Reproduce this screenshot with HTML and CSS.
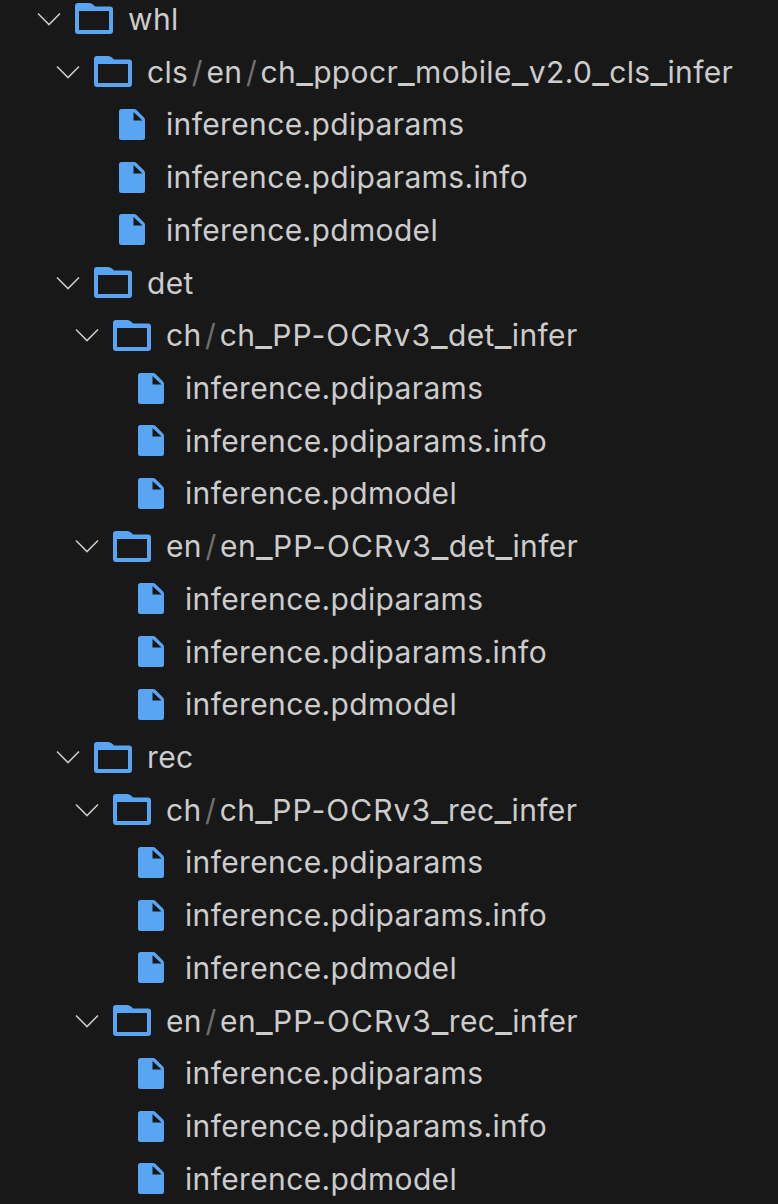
FILE: index.html
```html
<!DOCTYPE html>
<html lang="en">
<head>
    <meta charset="UTF-8">
    <meta name="viewport" content="width=device-width, initial-scale=1.0">
    <title>whl</title>
    <link rel="stylesheet" href="styles.css">
</head>
<body>
    <svg class="defs" width="0" height="0">
        <symbol id="chevron" viewBox="0 0 24 14">
            <path d="M1 1.500 L12 12.500 L23 1.500" fill="none" stroke="#c8c8c8" stroke-width="1.6"/>
        </symbol>
        <symbol id="folder" viewBox="0 0 38 31">
            <path fill="#58a5f4" fill-rule="evenodd" d="M3 0 H14 Q16.500 0 18 1.500 L20 3.500 H35 A3 3 0 0 1 38 6.500 V28 A3 3 0 0 1 35 31 H3 A3 3 0 0 1 0 28 V3 A3 3 0 0 1 3 0 Z M4 8 V27 H34 V8 Z"/>
        </symbol>
        <symbol id="file" viewBox="0 0 26 31">
            <path fill="#58a5f4" d="M2.500 0 H15 Q16.500 0 17.500 1 L25 8.500 Q26 9.500 26 11 V28.500 A2.500 2.500 0 0 1 23.500 31 H2.500 A2.500 2.500 0 0 1 0 28.500 V2.500 A2.500 2.500 0 0 1 2.500 0 Z"/>
            <path fill="#181818" d="M14.500 3 L23.500 11.500 H14.500 Z"/>
        </symbol>
    </svg>

    <div class="tree">
        <div class="row level-0"><span class="twistie"><svg class="chevron"><use href="#chevron"/></svg></span><svg class="folder"><use href="#folder"/></svg><span>whl</span></div>

        <div class="row level-1"><span class="twistie"><svg class="chevron"><use href="#chevron"/></svg></span><svg class="folder"><use href="#folder"/></svg><span>cls<i class="sep">/</i>en<i class="sep">/</i>ch<i class="us">_</i>ppocr<i class="us">_</i>mobile<i class="us">_</i>v2.0<i class="us">_</i>cls<i class="us">_</i>infer</span></div>
        <div class="row level-2"><span class="twistie"></span><svg class="file"><use href="#file"/></svg><span>inference.pdiparams</span></div>
        <div class="row level-2"><span class="twistie"></span><svg class="file"><use href="#file"/></svg><span>inference.pdiparams.info</span></div>
        <div class="row level-2"><span class="twistie"></span><svg class="file"><use href="#file"/></svg><span>inference.pdmodel</span></div>

        <div class="row level-1"><span class="twistie"><svg class="chevron"><use href="#chevron"/></svg></span><svg class="folder"><use href="#folder"/></svg><span>det</span></div>
        <div class="row level-2"><span class="twistie"><svg class="chevron"><use href="#chevron"/></svg></span><svg class="folder"><use href="#folder"/></svg><span>ch<i class="sep">/</i>ch<i class="us">_</i><span class="caps">PP-OCRv3</span><i class="us">_</i>det<i class="us">_</i>infer</span></div>
        <div class="row level-3"><span class="twistie"></span><svg class="file"><use href="#file"/></svg><span>inference.pdiparams</span></div>
        <div class="row level-3"><span class="twistie"></span><svg class="file"><use href="#file"/></svg><span>inference.pdiparams.info</span></div>
        <div class="row level-3"><span class="twistie"></span><svg class="file"><use href="#file"/></svg><span>inference.pdmodel</span></div>
        <div class="row level-2"><span class="twistie"><svg class="chevron"><use href="#chevron"/></svg></span><svg class="folder"><use href="#folder"/></svg><span>en<i class="sep">/</i>en<i class="us">_</i><span class="caps">PP-OCRv3</span><i class="us">_</i>det<i class="us">_</i>infer</span></div>
        <div class="row level-3"><span class="twistie"></span><svg class="file"><use href="#file"/></svg><span>inference.pdiparams</span></div>
        <div class="row level-3"><span class="twistie"></span><svg class="file"><use href="#file"/></svg><span>inference.pdiparams.info</span></div>
        <div class="row level-3"><span class="twistie"></span><svg class="file"><use href="#file"/></svg><span>inference.pdmodel</span></div>

        <div class="row level-1"><span class="twistie"><svg class="chevron"><use href="#chevron"/></svg></span><svg class="folder"><use href="#folder"/></svg><span>rec</span></div>
        <div class="row level-2"><span class="twistie"><svg class="chevron"><use href="#chevron"/></svg></span><svg class="folder"><use href="#folder"/></svg><span>ch<i class="sep">/</i>ch<i class="us">_</i><span class="caps">PP-OCRv3</span><i class="us">_</i>rec<i class="us">_</i>infer</span></div>
        <div class="row level-3"><span class="twistie"></span><svg class="file"><use href="#file"/></svg><span>inference.pdiparams</span></div>
        <div class="row level-3"><span class="twistie"></span><svg class="file"><use href="#file"/></svg><span>inference.pdiparams.info</span></div>
        <div class="row level-3"><span class="twistie"></span><svg class="file"><use href="#file"/></svg><span>inference.pdmodel</span></div>
        <div class="row level-2"><span class="twistie"><svg class="chevron"><use href="#chevron"/></svg></span><svg class="folder"><use href="#folder"/></svg><span>en<i class="sep">/</i>en<i class="us">_</i><span class="caps">PP-OCRv3</span><i class="us">_</i>rec<i class="us">_</i>infer</span></div>
        <div class="row level-3"><span class="twistie"></span><svg class="file"><use href="#file"/></svg><span>inference.pdiparams</span></div>
        <div class="row level-3"><span class="twistie"></span><svg class="file"><use href="#file"/></svg><span>inference.pdiparams.info</span></div>
        <div class="row level-3"><span class="twistie"></span><svg class="file"><use href="#file"/></svg><span>inference.pdmodel</span></div>
    </div>
</body>
</html>
```

FILE: styles.css
```css
html, body {
    height: 100%;
}

body {
    margin: 0;
    overflow: hidden;
    background: #181818;
    color: #cccccc;
    font-family: 'Inter', 'Liberation Sans', sans-serif;
    font-size: 30px;
    letter-spacing: 0.35px;
}

.defs {
    display: block;
    height: 0;
}

/* rows run past both edges of the window, as in a scrolled panel */
.tree {
    margin-top: -7.4px;
}

.row {
    display: flex;
    align-items: center;
    height: 52.73px;
    white-space: nowrap;
}

.level-0 { padding-left: 37px; }
.level-1 { padding-left: 56px; }
.level-2 { padding-left: 75px; }
.level-3 { padding-left: 94px; }

.twistie {
    display: block;
    flex: none;
    width: 38px;
    height: 14px;
}

.chevron {
    display: block;
    width: 24px;
    height: 14px;
}

.folder {
    flex: none;
    width: 38px;
    height: 31px;
    margin-right: 15px;
}

.file {
    flex: none;
    width: 26px;
    height: 31px;
    margin-left: 6px;
    margin-right: 21px;
}

.sep {
    font-style: normal;
    color: #707070;
    margin: 0 3.5px;
}

/* underscores are wider here than the font's own */
.us {
    font-style: normal;
    font-size: 36.5px;
    line-height: 0;
}

.caps {
    letter-spacing: 1.05px;
}
```
